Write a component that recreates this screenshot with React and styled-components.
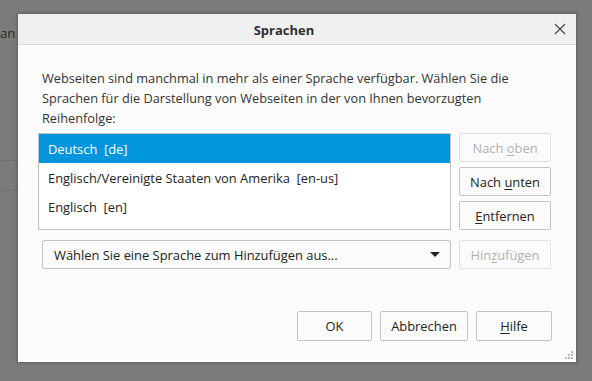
import React from "react";
import styled, { createGlobalStyle } from "styled-components";

const Global = createGlobalStyle`
  html, body { margin: 0; padding: 0; }
  body { width: 592px; height: 381px; overflow: hidden; background: #7b7b7b; font-family: "Open Sans", "Noto Sans", sans-serif; }
`;

const Page = styled.div`
  position: relative;
  width: 592px;
  height: 381px;
  background: #7b7b7b;
  overflow: hidden;
`;

const BackText = styled.div`
  padding: 24px 0 0 0;
  font-size: 13px;
  color: #2a2a2a;
  height: 136px;
`;

const BackLine = styled.div`
  width: 18px;
  height: 1px;
  background: #6e6e6e;
  margin-bottom: ${(p) => p.$mb || 0}px;
`;

const Dialog = styled.div`
  position: absolute;
  left: 18px;
  top: 14px;
  width: 558px;
  height: 348px;
  background: #fcfcfc;
  box-shadow: 0 0 3px 1px rgba(0, 0, 0, 0.25);
  display: flex;
  flex-direction: column;
`;

const TitleBar = styled.div`
  height: 30px;
  border-bottom: 1px solid #d8d8d8;
  background: #f0f0f0;
  display: flex;
  align-items: center;
  justify-content: center;
  padding: 1px 26px 0 0;
  box-sizing: border-box;
  height: 31px;
  position: relative;
  font-weight: 700;
  font-size: 13px;
  color: #303030;
`;

const Close = styled.div`
  position: absolute;
  right: 8px;
  top: 7px;
  width: 16px;
  height: 16px;
`;

const Body = styled.div`
  flex: 1;
  padding: 23px 25px 0 20px;
  display: flex;
  flex-direction: column;
`;

const Desc = styled.p`
  margin: 0 0 5px 4px;
  font-size: 12.75px;
  line-height: 20px;
  color: #333;
  white-space: nowrap;
`;

const Row = styled.div`
  display: flex;
  gap: 8px;
  margin-top: ${(p) => p.$mt || 0}px;
  margin-left: ${(p) => p.$ml || 0}px;
`;

const ListBox = styled.div`
  flex: 1;
  height: 95px;
  border: 1px solid #c2c2c2;
  background: #fff;
`;

const Item = styled.div`
  height: 29px;
  display: flex;
  align-items: center;
  padding-left: 9px;
  font-size: 12.9px;
  white-space: pre;
  color: ${(p) => (p.$sel ? "#fff" : "#222")};
  background: ${(p) => (p.$sel ? "#0095dd" : "transparent")};
`;

const Side = styled.div`
  display: flex;
  flex-direction: column;
  gap: 5px;
`;

const Button = styled.div`
  box-sizing: border-box;
  width: ${(p) => p.$w || 92}px;
  height: ${(p) => p.$h || 29}px;
  border: 1px solid ${(p) => (p.$disabled ? "#e0e0e0" : "#c4c4c4")};
  border-radius: 2px;
  background: #fbfbfb;
  display: flex;
  align-items: center;
  justify-content: center;
  font-size: 12.9px;
  color: ${(p) => (p.$disabled ? "#b0b0b0" : "#222")};
  white-space: pre;
`;

const Select = styled.div`
  box-sizing: border-box;
  width: 409px;
  height: 29px;
  border: 1px solid #c4c4c4;
  border-radius: 2px;
  background: #fbfbfb;
  display: flex;
  align-items: center;
  justify-content: space-between;
  padding: 0 10px 0 11px;
  font-size: 12.9px;
  color: #222;
`;

const Arrow = styled.div`
  width: 0;
  height: 0;
  border-left: 5px solid transparent;
  border-right: 5px solid transparent;
  border-top: 5px solid #222;
`;

const Footer = styled.div`
  margin-top: auto;
  display: flex;
  justify-content: flex-end;
  gap: 8px;
  padding: 0 24px 21px 0;
`;

const Grip = styled.svg`
  position: absolute;
  right: 3px;
  bottom: 3px;
`;

const U = styled.span`
  text-decoration: underline;
  text-underline-offset: 2px;
`;

export default function App() {
  return (
    <>
      <Global />
      <Page>
        <BackText>an</BackText>
        <BackLine $mb={29} />
        <BackLine />
        <Dialog>
          <TitleBar>
            Sprachen
            <Close>
              <svg width="16" height="16" viewBox="0 0 16 16">
                <path d="M3 3 L13 13 M13 3 L3 13" stroke="#444" strokeWidth="1.1" fill="none" />
              </svg>
            </Close>
          </TitleBar>
          <Body>
            <Desc>
              Webseiten sind manchmal in mehr als einer Sprache verfügbar. Wählen Sie die
              <br />
              Sprachen für die Darstellung von Webseiten in der von Ihnen bevorzugten
              <br />
              Reihenfolge:
            </Desc>
            <Row>
              <ListBox>
                <Item $sel>{"Deutsch  [de]"}</Item>
                <Item>{"Englisch/Vereinigte Staaten von Amerika  [en-us]"}</Item>
                <Item>{"Englisch  [en]"}</Item>
              </ListBox>
              <Side>
                <Button $disabled>
                  Nach <U>o</U>ben
                </Button>
                <Button>
                  Nach <U>u</U>nten
                </Button>
                <Button>
                  <U>E</U>ntfernen
                </Button>
              </Side>
            </Row>
            <Row $mt={10} $ml={4}>
              <Select>
                <span>Wählen Sie eine Sprache zum Hinzufügen aus...</span>
                <Arrow />
              </Select>
              <Button $disabled>
                Hin<U>z</U>ufügen
              </Button>
            </Row>
          </Body>
          <Footer>
            <Button $w={75} $h={30}>OK</Button>
            <Button $w={88} $h={30}>Abbrechen</Button>
            <Button $w={76} $h={30}>
              <U>H</U>ilfe
            </Button>
          </Footer>
          <Grip width="8" height="8" viewBox="0 0 8 8">
            <rect x="6" y="0" width="2" height="2" fill="#bbb" />
            <rect x="3" y="3" width="2" height="2" fill="#bbb" />
            <rect x="6" y="3" width="2" height="2" fill="#bbb" />
            <rect x="0" y="6" width="2" height="2" fill="#bbb" />
            <rect x="3" y="6" width="2" height="2" fill="#bbb" />
            <rect x="6" y="6" width="2" height="2" fill="#bbb" />
          </Grip>
        </Dialog>
      </Page>
    </>
  );
}
